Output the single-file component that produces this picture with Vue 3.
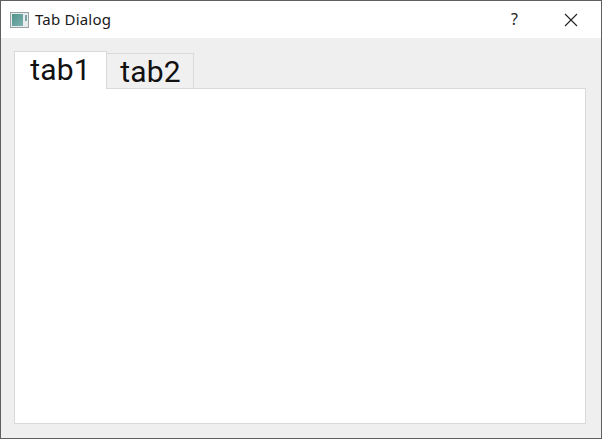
<script setup>
const tabs = [
  { id: 1, name: 'tab1', active: true },
  { id: 2, name: 'tab2', active: false },
]
</script>

<template>
  <div class="window">
    <div class="titlebar">
      <svg class="app-icon" width="19" height="16" viewBox="0 0 19 16">
        <defs>
          <linearGradient id="fill" x1="0" y1="0" x2="1" y2="1">
            <stop offset="0" stop-color="#4f9488" />
            <stop offset="1" stop-color="#7fb0b4" />
          </linearGradient>
        </defs>
        <rect x="0.5" y="0.5" width="18" height="15" fill="#e8ecec" stroke="#98a2a2" />
        <rect x="2" y="2" width="11" height="12" fill="url(#fill)" />
        <rect x="15" y="3" width="2" height="6" fill="#7fa3a8" />
      </svg>
      <span class="title">Tab Dialog</span>
      <span class="help">?</span>
      <svg class="close" width="14" height="14" viewBox="0 0 14 14">
        <path d="M1 1L13 13M13 1L1 13" stroke="#222" stroke-width="1.1" fill="none" />
      </svg>
    </div>

    <div class="body">
      <div class="tabbar">
        <div v-for="tab in tabs" :key="tab.id" class="tab" :class="{ active: tab.active }">{{ tab.name }}</div>
      </div>
      <div class="pane"></div>
    </div>
  </div>
</template>

<style scoped>
.window {
  width: 602px;
  height: 439px;
  box-sizing: border-box;
  border: 1px solid #5f5f5f;
  display: flex;
  flex-direction: column;
  background: #efefef;
  font-family: "Liberation Sans", Arial, sans-serif;
}

.titlebar {
  height: 37px;
  flex: none;
  display: flex;
  align-items: center;
  background: #fff;
  padding-left: 9px;
}
.app-icon { flex: none; margin-right: 6px; }
.title {
  font-family: "Noto Sans", sans-serif;
  font-size: 15px;
  letter-spacing: 0.2px;
  color: #1a1a1a;
  flex: 1;
  padding-bottom: 2px;
}
.help {
  font-family: "Noto Sans", sans-serif;
  font-size: 16px;
  color: #222;
  margin-right: 46px;
  padding-bottom: 2px;
}
.close { flex: none; margin-right: 23px; }

.body {
  flex: 1;
  display: flex;
  flex-direction: column;
  padding: 13px 15px 14px 13px;
  min-height: 0;
}

.tabbar {
  display: flex;
  align-items: flex-end;
  height: 38px;
  flex: none;
  position: relative;
  z-index: 1;
  margin-bottom: -1px;
}
.tab {
  box-sizing: border-box;
  width: 87px;
  height: 36px;
  padding-left: 1px;
  border: 1px solid #d9d9d9;
  border-left: none;
  background: #f0f0f0;
  font-family: Roboto, "Liberation Sans", sans-serif;
  font-weight: 400;
  font-size: 30px;
  letter-spacing: 0.2px;
  line-height: 35px;
  text-align: center;
  color: #111;
}
.tab.active {
  width: 93px;
  height: 38px;
  padding-left: 0;
  border-left: 1px solid #d9d9d9;
  border-bottom: none;
  background: #fff;
}

.pane {
  flex: 1;
  background: #fff;
  border: 1px solid #d9d9d9;
}
</style>
